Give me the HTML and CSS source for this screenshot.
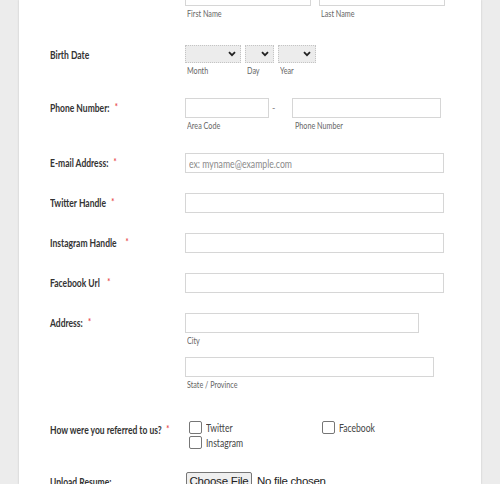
FILE: index.html
```html
<!DOCTYPE html>
<html>
<head>
<meta charset="utf-8">
<link rel="stylesheet" href="styles.css">
</head>
<body>
<div class="card">
  <div class="form">
    <div class="row row-name">
      <div class="label"><span class="t">Full Name</span></div>
      <div class="fields">
        <div class="inline">
          <div class="sub-field"><div class="input w125"></div><div class="sublabel"><span class="c">First Name</span></div></div>
          <div class="sub-field gap8"><div class="input w125"></div><div class="sublabel"><span class="c">Last Name</span></div></div>
        </div>
      </div>
    </div>

    <div class="row row-birth">
      <div class="label"><span class="t">Birth Date</span></div>
      <div class="fields">
        <div class="inline">
          <div class="sub-field"><div class="select w55"><svg width="8" height="6" viewBox="0 0 8 6"><path d="M1 1.2 L4 4.2 L7 1.2" fill="none" stroke="#222" stroke-width="1.8"/></svg></div><div class="sublabel"><span class="c">Month</span></div></div>
          <div class="sub-field gap4"><div class="select w28"><svg width="8" height="6" viewBox="0 0 8 6"><path d="M1 1.2 L4 4.2 L7 1.2" fill="none" stroke="#222" stroke-width="1.8"/></svg></div><div class="sublabel"><span class="c">Day</span></div></div>
          <div class="sub-field gap4"><div class="select w37"><svg width="8" height="6" viewBox="0 0 8 6"><path d="M1 1.2 L4 4.2 L7 1.2" fill="none" stroke="#222" stroke-width="1.8"/></svg></div><div class="sublabel"><span class="c">Year</span></div></div>
        </div>
      </div>
    </div>

    <div class="row row-gap21">
      <div class="label"><span class="t">Phone Number:<span class="req">*</span></span></div>
      <div class="fields">
        <div class="inline">
          <div class="sub-field"><div class="input w83"></div><div class="sublabel"><span class="c">Area Code</span></div></div>
          <div class="dash">-</div>
          <div class="sub-field"><div class="input w148"></div><div class="sublabel sub-phone"><span class="c">Phone Number</span></div></div>
        </div>
      </div>
    </div>

    <div class="row row-gap21">
      <div class="label"><span class="t">E-mail Address:<span class="req">*</span></span></div>
      <div class="fields"><div class="input w258"><span class="placeholder">ex: myname@example.com</span></div></div>
    </div>

    <div class="row row-gap20">
      <div class="label"><span class="t">Twitter Handle<span class="req">*</span></span></div>
      <div class="fields"><div class="input w258"></div></div>
    </div>

    <div class="row row-gap20">
      <div class="label"><span class="t">Instagram Handle<span class="req wide">*</span></span></div>
      <div class="fields"><div class="input w258"></div></div>
    </div>

    <div class="row row-gap20">
      <div class="label"><span class="t">Facebook Url<span class="req mid">*</span></span></div>
      <div class="fields"><div class="input w258"></div></div>
    </div>

    <div class="row row-gap20">
      <div class="label"><span class="t">Address:<span class="req">*</span></span></div>
      <div class="fields">
        <div class="sub-field"><div class="input w233"></div><div class="sublabel"><span class="c">City</span></div></div>
        <div class="sub-field state"><div class="input w248"></div><div class="sublabel"><span class="c">State / Province</span></div></div>
      </div>
    </div>

    <div class="row row-refer">
      <div class="label"><span class="t">How were you referred to us?<span class="req tight">*</span></span></div>
      <div class="fields">
        <div class="checks">
          <div class="check"><span class="box"></span><span class="c">Twitter</span></div>
          <div class="check"><span class="box"></span><span class="c">Facebook</span></div>
          <div class="check"><span class="box"></span><span class="c">Instagram</span></div>
        </div>
      </div>
    </div>

    <div class="row row-upload">
      <div class="label"><span class="t">Upload Resume:</span></div>
      <div class="fields">
        <div class="file"><span class="file-btn">Choose File</span><span class="file-text">No file chosen</span></div>
      </div>
    </div>
  </div>
</div>
</body>
</html>
```

FILE: styles.css
```css
html, body {
  margin: 0;
  padding: 0;
}
body {
  background: #ececec;
  height: 484px;
  overflow: hidden;
  font-family: Lato, "DejaVu Sans Condensed", sans-serif;
}
.card {
  margin: 0 19px;
  height: 484px;
  background: #fff;
  box-shadow: 0 0 2px rgba(0, 0, 0, 0.18);
  display: flex;
  flex-direction: column;
  padding-left: 31px;
}
.form {
  display: flex;
  flex-direction: column;
}
.row {
  display: flex;
  align-items: flex-start;
}
.row-name { margin-top: -14px; }
.row-birth { margin-top: 25px; }
.row-gap21 { margin-top: 21px; }
.row-gap20 { margin-top: 20px; }
.row-refer { margin-top: 29px; }
.row-upload { margin-top: 22px; }

/* condensed look: the reference uses a narrow face that is not installed */
.t, .c, .placeholder {
  display: inline-block;
  transform-origin: 0 50%;
}

.label {
  width: 135px;
  height: 20px;
  flex: none;
  line-height: 20px;
  font-size: 11.5px;
  font-weight: bold;
  color: #333;
  white-space: nowrap;
}
.label .t {
  transform: scaleX(0.74);
}
.req {
  color: #e8474c;
  font-size: 10px;
  margin-left: 7px;
  position: relative;
  top: -2px;
}
.req.wide { margin-left: 12px; }
.req.mid { margin-left: 10px; }
.req.tight { margin-left: 6px; }

.fields {
  display: flex;
  flex-direction: column;
}
.inline {
  display: flex;
  align-items: flex-start;
}
.sub-field {
  display: flex;
  flex-direction: column;
}
.gap8 { margin-left: 8px; }
.gap4 { margin-left: 4px; }
.state { margin-top: 10px; }

.input {
  box-sizing: border-box;
  height: 20px;
  border: 1px solid #d6d6d6;
  background: #fff;
  display: flex;
  align-items: center;
  padding-left: 3px;
}
.w125 { width: 126px; }
.w83 { width: 84px; }
.w148 { width: 149px; }
.w258 { width: 259px; }
.w233 { width: 234px; }
.w248 { width: 249px; }
.placeholder {
  font-size: 11px;
  color: #8a8a8a;
  transform: scaleX(0.79);
}

.select {
  box-sizing: border-box;
  height: 18px;
  border: 1px dotted #c4c4c4;
  background: #ececec;
  display: flex;
  align-items: center;
  justify-content: flex-end;
  padding-right: 4px;
}
.w55 { width: 56px; }
.w28 { width: 29px; }
.w37 { width: 38px; }

.sublabel {
  margin-top: 2px;
  line-height: 12px;
  height: 12px;
  font-size: 9px;
  color: #666;
  padding-left: 2px;
  white-space: nowrap;
}
.sublabel .c {
  transform: scaleX(0.8);
}
.sub-phone { padding-left: 3px; }
.dash {
  width: 23px;
  flex: none;
  font-size: 9px;
  color: #777;
  line-height: 20px;
  padding-left: 3px;
  box-sizing: border-box;
}

.checks {
  display: grid;
  grid-template-columns: 133px 120px;
  grid-auto-rows: 15px;
  padding-left: 4px;
}
.check {
  display: flex;
  align-items: center;
  font-size: 11px;
  color: #444;
  white-space: nowrap;
}
.check .c {
  transform: scaleX(0.78);
}
.box {
  box-sizing: border-box;
  width: 13px;
  height: 13px;
  border: 1px solid #767676;
  border-radius: 2px;
  margin-right: 4px;
  background: #fff;
}

.file {
  display: flex;
  align-items: flex-start;
  font-family: "Liberation Sans", Arial, sans-serif;
  font-size: 11.5px;
  color: #222;
  white-space: nowrap;
}
.file-btn {
  box-sizing: border-box;
  height: 18px;
  width: 66px;
  margin-left: 1px;
  text-align: center;
  border: 1px solid #767676;
  border-radius: 2px;
  background: #efefef;
  line-height: 16px;
  margin-right: 5px;
  letter-spacing: -0.2px;
}
.file-text {
  line-height: 18px;
  letter-spacing: -0.3px;
}
```
